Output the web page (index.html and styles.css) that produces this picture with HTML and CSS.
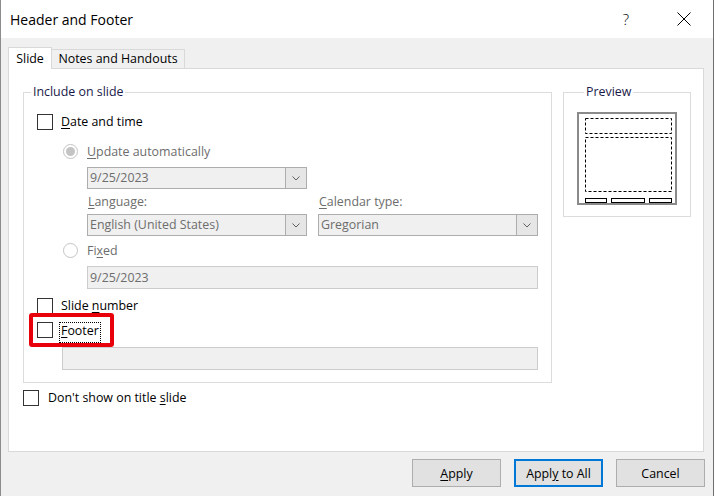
FILE: index.html
```html
<!DOCTYPE html>
<html lang="en">

<head>
    <meta charset="UTF-8">
    <meta name="viewport" content="width=device-width, initial-scale=1.0">
    <title>Header and Footer</title>
    <link rel="stylesheet" href="styles.css">
</head>

<body>
    <div class="dialog">
        <!-- title bar -->
        <div class="titlebar">
            <span class="title">Header and Footer</span>
            <span class="help">?</span>
            <svg class="close" width="14" height="14" viewBox="0 0 14 14">
                <path d="M0.5 0.5 L13.5 13.5 M13.5 0.5 L0.5 13.5" stroke="#000" stroke-width="1" fill="none" />
            </svg>
        </div>

        <div class="body">
            <div class="tabs">
                <span class="tab active">Slide</span>
                <span class="tab">Notes and Handouts</span>
            </div>

            <div class="panel">
                <div class="groups">
                    <fieldset class="group include">
                        <legend>Include on slide</legend>

                        <div class="check date-row"><span class="box"></span><span><u>D</u>ate and time</span></div>

                        <div class="radio update-row"><span class="dot on"></span><span><u>U</u>pdate automatically</span></div>
                        <div class="combo date-combo">
                            <span class="value">9/25/2023</span>
                            <span class="arrow"><svg width="8" height="5" viewBox="0 0 8 5"><path d="M0.5 0.5 L4 4 L7.5 0.5" stroke="#606060" fill="none" /></svg></span>
                        </div>

                        <div class="combo-row">
                            <div class="field">
                                <span class="caption"><u>L</u>anguage:</span>
                                <div class="combo">
                                    <span class="value">English (United States)</span>
                                    <span class="arrow"><svg width="8" height="5" viewBox="0 0 8 5"><path d="M0.5 0.5 L4 4 L7.5 0.5" stroke="#606060" fill="none" /></svg></span>
                                </div>
                            </div>
                            <div class="field">
                                <span class="caption"><u>C</u>alendar type:</span>
                                <div class="combo">
                                    <span class="value">Gregorian</span>
                                    <span class="arrow"><svg width="8" height="5" viewBox="0 0 8 5"><path d="M0.5 0.5 L4 4 L7.5 0.5" stroke="#606060" fill="none" /></svg></span>
                                </div>
                            </div>
                        </div>

                        <div class="radio fixed-row"><span class="dot"></span><span>Fi<u>x</u>ed</span></div>
                        <div class="textbox fixed-text">9/25/2023</div>

                        <div class="check number-row"><span class="box"></span><span>Slide <u>n</u>umber</span></div>
                        <div class="check footer-row marked"><span class="box"></span><span class="focus"><u>F</u>ooter</span></div>
                        <div class="textbox footer-text"></div>
                    </fieldset>

                    <fieldset class="group preview">
                        <legend>Preview</legend>
                        <svg class="thumb" width="100" height="93" viewBox="0 0 100 93">
                            <rect x="1" y="1" width="98" height="91" fill="#fff" stroke="#8a8a8a" stroke-width="2" />
                            <rect x="8.5" y="6.5" width="86" height="15" fill="none" stroke="#000" stroke-dasharray="3 2" />
                            <rect x="8.5" y="25.5" width="86" height="54" fill="none" stroke="#000" stroke-dasharray="3 2" />
                            <rect x="8.5" y="86.5" width="21" height="4" fill="#fff" stroke="#000" />
                            <rect x="34.5" y="86.5" width="33" height="4" fill="#fff" stroke="#000" />
                            <rect x="72.5" y="86.5" width="22" height="4" fill="#fff" stroke="#000" />
                        </svg>
                    </fieldset>
                </div>

                <div class="check title-row"><span class="box"></span><span>Don't show on title <u>s</u>lide</span></div>
            </div>

            <div class="buttons">
                <button class="btn"><u>A</u>pply</button>
                <button class="btn default">Appl<u>y</u> to All</button>
                <button class="btn">Cancel</button>
            </div>
        </div>
    </div>
</body>

</html>
```

FILE: styles.css
```css
* {
    margin: 0;
    padding: 0;
    box-sizing: border-box;
}

body {
    width: 715px;
    height: 496px;
    overflow: hidden;
    background: #fff;
    font-family: "Open Sans", "Noto Sans", sans-serif;
    font-size: 12.4px;
    color: #000;
}

u {
    text-decoration: underline;
    text-underline-offset: 2px;
}

/* 窗口外框 */
.dialog {
    width: 714px;
    height: 496px;
    border-left: 1px solid #8c8c8c;
    border-right: 1px solid #6e6e6e;
    display: flex;
    flex-direction: column;
}

.titlebar {
    height: 38px;
    display: flex;
    align-items: center;
    padding-left: 9px;
    background: #fff;
}

.titlebar .title {
    flex: 1;
    font-size: 14px;
}

.titlebar .help {
    width: 10px;
    margin-right: 46px;
    text-align: center;
    font-size: 15px;
    font-weight: 300;
}

.titlebar .close {
    margin-right: 22px;
}

.body {
    flex: 1;
    background: #f0f0f0;
    padding: 9px 0 0 7px;
}

/* 选项卡 */
.tabs {
    height: 21px;
    display: flex;
    align-items: flex-end;
}

.tab {
    height: 19px;
    width: 134px;
    margin-left: -1px;
    padding-top: 1px;
    border: 1px solid #d9d9d9;
    border-bottom: none;
    background: #f0f0f0;
    text-align: center;
    line-height: 16px;
}

.tab.active {
    position: relative;
    z-index: 1;
    width: 44px;
    height: 22px;
    margin-left: 0;
    margin-bottom: -1px;
    padding-top: 3px;
    background: #fff;
}

.panel {
    width: 696px;
    height: 384px;
    border: 1px solid #d9d9d9;
    background: #fff;
    padding: 15px 0 0 14px;
}

.groups {
    display: flex;
    align-items: flex-start;
    gap: 11px;
}

/* 分组框 */
.group {
    border: 1px solid #dcdcdc;
}

.group legend {
    margin-left: 7px;
    padding: 0 2px;
    line-height: 16px;
    color: #1a1a4a;
}

.include {
    width: 529px;
    padding-bottom: 12px;
}

.preview {
    width: 128px;
    padding: 12px 0 11px 13px;
}

.thumb {
    display: block;
}

/* 复选框 / 单选框 */
.check,
.radio {
    height: 16px;
    display: flex;
    align-items: center;
    gap: 8px;
    line-height: 16px;
}

.box {
    width: 16px;
    height: 16px;
    border: 1px solid #333;
    background: #fff;
    flex-shrink: 0;
}

.radio {
    height: 15px;
    gap: 9px;
    color: #6d6d6d;
}

.dot {
    width: 15px;
    height: 15px;
    border: 1px solid #c4c4c4;
    border-radius: 50%;
    background: #fff;
    display: flex;
    align-items: center;
    justify-content: center;
}

.dot.on::before {
    content: '';
    width: 9px;
    height: 9px;
    border-radius: 50%;
    background: #c4c4c4;
}

.date-row {
    margin: 14px 0 0 13px;
}

.update-row {
    margin: 14px 0 0 39px;
}

.combo {
    width: 220px;
    height: 22px;
    display: flex;
    border: 1px solid #adadad;
    background: #f0f0f0;
    color: #6d6d6d;
}

.combo .value {
    flex: 1;
    padding-left: 2px;
    line-height: 20px;
}

.combo .arrow {
    width: 21px;
    border-left: 1px solid #adadad;
    background: #e6e6e6;
    display: flex;
    align-items: center;
    justify-content: center;
}

.date-combo {
    margin: 8px 0 0 63px;
}

.combo-row {
    display: flex;
    gap: 11px;
    margin: 5px 0 0 63px;
}

.field .caption {
    display: block;
    height: 16px;
    line-height: 16px;
    padding-left: 1px;
    margin-bottom: 4px;
    color: #6d6d6d;
}

.fixed-row {
    margin: 7px 0 0 39px;
}

.textbox {
    height: 23px;
    border: 1px solid #cccccc;
    background: #f0f0f0;
    color: #6d6d6d;
    padding-left: 2px;
    line-height: 21px;
}

.fixed-text {
    width: 451px;
    margin: 8px 0 0 63px;
}

.number-row {
    margin: 9px 0 0 13px;
}

.footer-row {
    margin: 8px 0 0 13px;
    width: 65px;
}

.footer-row .focus {
    align-self: flex-start;
    margin-left: -2px;
    padding: 0 1px 3px;
    border: 1px dotted #000;
    line-height: 16px;
}

/* 红色标注框 */
.marked {
    position: relative;
}

.marked::after {
    content: '';
    position: absolute;
    left: -8px;
    top: -9px;
    width: 85px;
    height: 34px;
    box-sizing: border-box;
    border: 4px solid #e8000b;
    border-radius: 3px;
}

.footer-text {
    width: 476px;
    margin: 9px 0 0 38px;
}

.title-row {
    margin-top: 7px;
    gap: 9px;
}

/* 底部按钮 */
.buttons {
    display: flex;
    justify-content: flex-end;
    gap: 13px;
    margin: 7px 8px 0 0;
}

.btn {
    width: 89px;
    height: 28px;
    border: 1px solid #adadad;
    background: #e1e1e1;
    font-family: inherit;
    font-size: 12.4px;
    color: #000;
}

.btn.default {
    border: 2px solid #0078d7;
}
```
